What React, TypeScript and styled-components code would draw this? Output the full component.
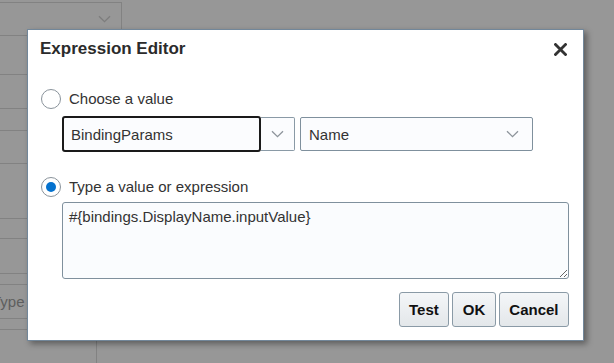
import React from "react";
import styled, { createGlobalStyle } from "styled-components";

const Global = createGlobalStyle`
  html, body { margin: 0; padding: 0; }
  body {
    background: #979797;
    font-family: "Liberation Sans", Arial, sans-serif;
    overflow: hidden;
  }
`;

const Screen = styled.div`
  position: relative;
  width: 614px;
  height: 363px;
  overflow: hidden;
  background: #979797;
`;

const BgPage = styled.div`
  display: flex;
  flex-direction: column;
  width: 300px;
  height: 100%;
  padding-top: 2px;
  box-sizing: border-box;
`;

const BgField = styled.div`
  box-sizing: border-box;
  width: 122px;
  height: 34px;
  border-top: 1px solid #828282;
  border-right: 1px solid #828282;
  border-bottom: 1px solid #828282;
  display: flex;
  align-items: center;
  justify-content: flex-end;
  padding-right: 10px;
`;

const BgRow = styled.div<{ $h: number }>`
  box-sizing: border-box;
  height: ${(p) => p.$h}px;
  border-bottom: 1px solid #828282;
  display: flex;
  align-items: center;
  flex-shrink: 0;
`;

const BgText = styled.span`
  margin-left: -8px;
  font-size: 15px;
  color: #5e5e5e;
`;

const BgTail = styled.div`
  flex: 1;
  display: flex;
`;

const BgColumn = styled.div`
  width: 97px;
  box-sizing: border-box;
  border-right: 1px solid #828282;
`;

const Dialog = styled.div`
  position: absolute;
  left: 27px;
  top: 29px;
  width: 557px;
  box-sizing: border-box;
  background: #ffffff;
  border: 1px solid #72879a;
  box-shadow: 3px 3px 6px rgba(0, 0, 0, 0.38);
  display: flex;
  flex-direction: column;
`;

const Header = styled.div`
  display: flex;
  align-items: center;
  justify-content: space-between;
  padding: 9px 16px 0 12px;
  height: 20px;
`;

const Title = styled.h1`
  margin: 0;
  font-size: 17px;
  line-height: 20px;
  font-weight: bold;
  color: #2b2b2b;
`;

const CloseButton = styled.button`
  border: 0;
  background: transparent;
  padding: 0;
  width: 14px;
  height: 14px;
  display: flex;
  align-items: center;
  justify-content: center;
  cursor: pointer;
`;

const Body = styled.div`
  display: flex;
  flex-direction: column;
  padding: 30px 14px 13px 13px;
`;

const RadioRow = styled.label<{ $mt?: number }>`
  display: flex;
  align-items: center;
  gap: 8px;
  height: 20px;
  margin-top: ${(p) => p.$mt ?? 0}px;
  font-size: 15px;
  line-height: 20px;
  color: #333333;
`;

const RadioCircle = styled.span<{ $checked?: boolean }>`
  box-sizing: border-box;
  width: 20px;
  height: 20px;
  border-radius: 50%;
  border: 1px solid #8a939b;
  background: #ffffff;
  display: flex;
  align-items: center;
  justify-content: center;
  flex-shrink: 0;
  &::after {
    content: "";
    display: ${(p) => (p.$checked ? "block" : "none")};
    width: 10px;
    height: 10px;
    border-radius: 50%;
    background: #0572ce;
  }
`;

const Indented = styled.div<{ $mt: number }>`
  margin-left: 21px;
  margin-top: ${(p) => p.$mt}px;
  display: flex;
  align-items: center;
`;

const SelectBox = styled.div<{ $focused?: boolean; $w: number }>`
  box-sizing: border-box;
  width: ${(p) => p.$w}px;
  height: ${(p) => (p.$focused ? 36 : 34)}px;
  border: ${(p) => (p.$focused ? "2px solid #1a1a1a" : "1px solid #7f909d")};
  border-radius: ${(p) => (p.$focused ? 3 : 2)}px;
  background: #fbfcfe;
  display: flex;
  align-items: center;
  justify-content: space-between;
  padding: 0 13px 0 ${(p) => (p.$focused ? 7 : 8)}px;
  font-size: 15px;
  color: #333333;
`;

const DropButton = styled.div`
  box-sizing: border-box;
  width: 34px;
  height: 34px;
  border: 1px solid #8a9aa6;
  border-left: 0;
  border-radius: 0 2px 2px 0;
  background: #fbfcfe;
  display: flex;
  align-items: center;
  justify-content: center;
  margin-right: 5px;
`;

const TextArea = styled.textarea`
  box-sizing: border-box;
  width: 507px;
  height: 77px;
  border: 1px solid #7f909d;
  border-radius: 3px;
  background: #fafcfe;
  padding: 5px 6px;
  font-family: "Liberation Sans", Arial, sans-serif;
  font-size: 15px;
  line-height: 18px;
  color: #333333;
  resize: both;
  outline: none;
`;

const Actions = styled.div`
  display: flex;
  justify-content: flex-end;
  gap: 3px;
  margin-top: 13px;
`;

const Button = styled.button`
  box-sizing: border-box;
  height: 35px;
  padding: 0 9.5px;
  border: 1px solid #8a9aa6;
  border-radius: 3px;
  background: linear-gradient(#f4f6f8, #e3e7ea);
  font-family: "Liberation Sans", Arial, sans-serif;
  font-size: 15px;
  font-weight: bold;
  color: #111111;
  cursor: pointer;
`;

const Chevron = ({ color = "#8d949b" }: { color?: string }) => (
  <svg width="13" height="8" viewBox="0 0 13 8" fill="none">
    <polyline points="1,1.2 6.5,6.6 12,1.2" stroke={color} strokeWidth="1.3" />
  </svg>
);

const CloseIcon = () => (
  <svg width="13" height="13" viewBox="0 0 13 13">
    <path d="M1.5 1.5 L11.5 11.5 M11.5 1.5 L1.5 11.5" stroke="#333" strokeWidth="2.8" strokeLinecap="square" />
  </svg>
);

const bgRows = [39, 34, 22, 33, 55, 20, 35, 11, 34, 11];

export default function App() {
  return (
    <Screen>
      <Global />
      <BgPage>
        <BgField>
          <Chevron color="#7d7d7d" />
        </BgField>
        {bgRows.map((h, i) => (
          <BgRow key={i} $h={h}>
            {i === 8 && <BgText>Type</BgText>}
          </BgRow>
        ))}
        <BgTail>
          <BgColumn />
        </BgTail>
      </BgPage>
      <Dialog role="dialog">
        <Header>
          <Title>Expression Editor</Title>
          <CloseButton aria-label="Close">
            <CloseIcon />
          </CloseButton>
        </Header>
        <Body>
          <RadioRow>
            <RadioCircle />
            Choose a value
          </RadioRow>
          <Indented $mt={7}>
            <SelectBox $focused $w={199}>BindingParams</SelectBox>
            <DropButton>
              <Chevron />
            </DropButton>
            <SelectBox $w={233}>
              Name
              <Chevron />
            </SelectBox>
          </Indented>
          <RadioRow $mt={25}>
            <RadioCircle $checked />
            Type a value or expression
          </RadioRow>
          <Indented $mt={5}>
            <TextArea defaultValue="#{bindings.DisplayName.inputValue}" />
          </Indented>
          <Actions>
            <Button>Test</Button>
            <Button>OK</Button>
            <Button>Cancel</Button>
          </Actions>
        </Body>
      </Dialog>
    </Screen>
  );
}
